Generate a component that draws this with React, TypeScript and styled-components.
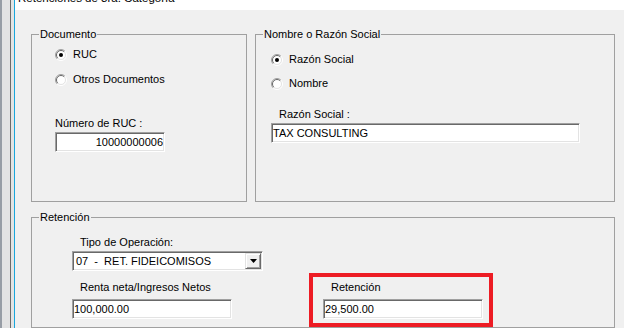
import React from 'react';
import styled, {createGlobalStyle} from 'styled-components';

const GlobalStyle = createGlobalStyle`
    html, body {
        margin: 0;
        padding: 0;
        background: #f0f0f0;
        overflow: hidden;
    }
    body {
        font-family: "Liberation Sans", Arial, sans-serif;
        font-size: 11px;
        color: #000;
    }
`;

const Screen = styled.div`
    display: flex;
    width: 624px;
    height: 328px;
    overflow: hidden;
`;

const Strip = styled.div<{$w: number; $color: string; $top?: number}>`
    flex: 0 0 ${p => p.$w}px;
    background: ${p => p.$color};
    margin-top: ${p => p.$top || 0}px;
`;

const Window = styled.div`
    flex: 1;
    display: flex;
    flex-direction: column;
    border-left: 1px solid #19a6dc;
    background: #f0f0f0;
    min-width: 0;
`;

const TitleBar = styled.div`
    flex: 0 0 10px;
    background: #fff;
    padding-left: 3px;
`;

const Title = styled.div`
    margin-top: -8px;
    font-size: 11.5px;
    line-height: 12px;
    white-space: nowrap;
`;

const Body = styled.div`
    padding: 18px 9px 0 16px;
    display: flex;
    flex-direction: column;
`;

const TopRow = styled.div`
    display: flex;
    gap: 8px;
`;

const GroupBox = styled.fieldset<{$w?: number; $h?: number}>`
    margin: 0;
    padding: 0;
    border: 1px solid #a0a0a0;
    min-width: 0;
    box-sizing: border-box;
    ${p => p.$w ? `width: ${p.$w}px;` : 'flex: 1;'}
    ${p => p.$h ? `height: ${p.$h}px;` : ''}

    legend {
        padding: 0 1px;
        margin-left: 7px;
        line-height: 13px;
        font-size: 11px;
    }
`;

const GroupContent = styled.div<{$top: number; $left: number}>`
    display: flex;
    flex-direction: column;
    align-items: flex-start;
    padding: ${p => p.$top}px 0 0 ${p => p.$left}px;
`;

const RadioRow = styled.div<{$gap?: number}>`
    display: flex;
    align-items: center;
    gap: 6px;
    height: 13px;
    line-height: 13px;
    margin-top: ${p => p.$gap || 0}px;
`;

const Label = styled.div<{$gap?: number; $indent?: number}>`
    line-height: 13px;
    white-space: pre;
    margin-top: ${p => p.$gap || 0}px;
    margin-left: ${p => p.$indent || 0}px;
`;

const TextBox = styled.input<{$w: number; $align?: string}>`
    box-sizing: border-box;
    width: ${p => p.$w}px;
    height: 20px;
    margin: 2px 0 0;
    padding: 0 1px;
    font-family: "Liberation Sans", Arial, sans-serif;
    font-size: 11px;
    color: #000;
    background: #fff;
    text-align: ${p => p.$align || 'left'};
    border: 1px solid;
    border-color: #a0a0a0 #fff #fff #a0a0a0;
    box-shadow: inset 1px 1px #696969, inset -1px -1px #e3e3e3;
    outline: none;
`;

const Combo = styled.div`
    box-sizing: border-box;
    width: 191px;
    height: 20px;
    margin-top: 2px;
    display: flex;
    align-items: center;
    background: #fff;
    border: 1px solid;
    border-color: #a0a0a0 #fff #fff #a0a0a0;
    box-shadow: inset 1px 1px #696969, inset -1px -1px #e3e3e3;
    padding: 1px 1px 1px 3px;
`;

const ComboText = styled.div`
    flex: 1;
    white-space: pre;
    line-height: 16px;
`;

const DropButton = styled.div`
    box-sizing: border-box;
    width: 16px;
    height: 16px;
    display: flex;
    align-items: center;
    justify-content: center;
    background: #f0f0f0;
    border: 1px solid;
    border-color: #e3e3e3 #696969 #696969 #e3e3e3;
    box-shadow: inset 1px 1px #fff, inset -1px -1px #a0a0a0;
`;

const RetRow = styled.div`
    display: flex;
    align-items: flex-start;
    margin-top: 2px;
`;

const Field = styled.div<{$w: number}>`
    flex: 0 0 ${p => p.$w}px;
    display: flex;
    flex-direction: column;
    align-items: flex-start;
    padding-top: 8px;
`;

const Highlight = styled.div`
    display: flex;
    flex-direction: column;
    align-items: flex-start;
    border: 4px solid #ed1c24;
    padding: 4px 6px 4px 10px;
`;

function RadioIcon({checked}: {checked?: boolean}) {
    return (
        <svg width='12' height='12' viewBox='0 0 12 12'>
            <circle cx='6' cy='6' r='5' fill='#fff'/>
            <path d='M2.1 9.9 A5.5 5.5 0 0 1 9.9 2.1' fill='none' stroke='#a0a0a0'/>
            <path d='M9.9 2.1 A5.5 5.5 0 0 1 2.1 9.9' fill='none' stroke='#fff'/>
            <path d='M2.8 9.2 A4.5 4.5 0 0 1 9.2 2.8' fill='none' stroke='#696969'/>
            <path d='M9.2 2.8 A4.5 4.5 0 0 1 2.8 9.2' fill='none' stroke='#e3e3e3'/>
            {checked && <circle cx='6' cy='6' r='2' fill='#000'/>}
        </svg>
    );
}

function Radio({label, checked, gap}: {label: string; checked?: boolean; gap?: number}) {
    return (
        <RadioRow $gap={gap}>
            <RadioIcon checked={checked}/>
            <span>{label}</span>
        </RadioRow>
    );
}

export default function App() {
    return (
        <Screen>
            <GlobalStyle/>
            <Strip $w={2} $color='#979da5'/>
            <Strip $w={8} $color='#e3e3e3'/>
            <Strip $w={1} $color='#6b6b6b'/>
            <Strip $w={3} $color='#e3e3e3'/>
            <Window>
                <TitleBar>
                    <Title>Retenciones de 3ra. Categoría</Title>
                </TitleBar>
                <Body>
                    <TopRow>
                        <GroupBox $w={216} $h={174}>
                            <legend>Documento</legend>
                            <GroupContent $top={7} $left={23}>
                                <Radio label='RUC' checked/>
                                <Radio label='Otros Documentos' gap={12}/>
                                <Label $gap={31}>Número de RUC :</Label>
                                <TextBox $w={110} $align='right' readOnly defaultValue='10000000006'/>
                            </GroupContent>
                        </GroupBox>
                        <GroupBox $h={174}>
                            <legend>Nombre o Razón Social</legend>
                            <GroupContent $top={12} $left={15}>
                                <Radio label='Razón Social' checked/>
                                <Radio label='Nombre' gap={11}/>
                                <Label $gap={18} $indent={8}>Razón Social :</Label>
                                <TextBox $w={309} readOnly defaultValue='TAX CONSULTING'/>
                            </GroupContent>
                        </GroupBox>
                    </TopRow>
                    <GroupBox style={{marginTop: 9}}>
                        <legend>Retención</legend>
                        <GroupContent $top={12} $left={40}>
                            <Label $indent={8}>Tipo de Operación:</Label>
                            <Combo>
                                <ComboText>07  -  RET. FIDEICOMISOS</ComboText>
                                <DropButton>
                                    <svg width='7' height='4' viewBox='0 0 7 4'>
                                        <path d='M0 0 H7 L3.5 4 Z' fill='#000'/>
                                    </svg>
                                </DropButton>
                            </Combo>
                            <RetRow>
                                <Field $w={237}>
                                    <Label $indent={8}>Renta neta/Ingresos Netos</Label>
                                    <TextBox $w={160} style={{marginTop: 5}} readOnly defaultValue='100,000.00'/>
                                </Field>
                                <Highlight>
                                    <Label $indent={8}>Retención</Label>
                                    <TextBox $w={160} style={{marginTop: 5}} readOnly defaultValue='29,500.00'/>
                                </Highlight>
                            </RetRow>
                        </GroupContent>
                    </GroupBox>
                </Body>
            </Window>
        </Screen>
    );
}
